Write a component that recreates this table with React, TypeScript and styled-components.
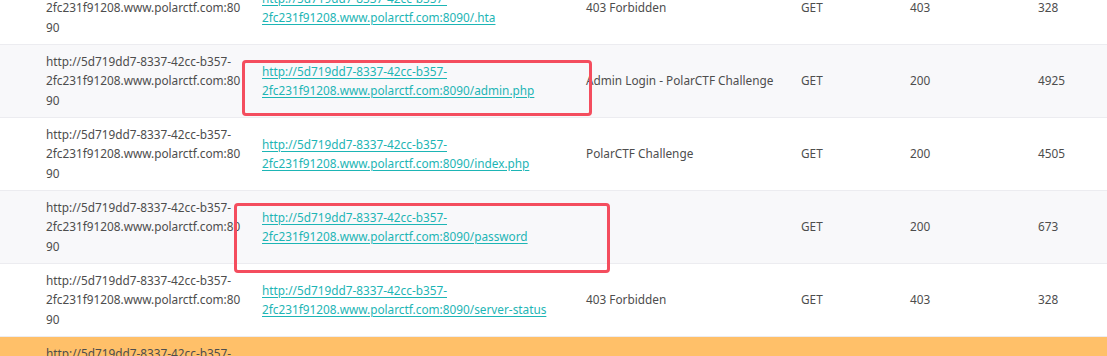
import styled, { createGlobalStyle } from 'styled-components';

const GlobalStyle = createGlobalStyle`
  html, body {
    margin: 0;
    padding: 0;
    background: #ffffff;
  }
  body {
    font-family: 'Noto Sans', 'Open Sans', sans-serif;
  }
`;

const Viewport = styled.div`
  position: relative;
  width: 1107px;
  height: 356px;
  overflow: hidden;
  background: #ffffff;
`;

// table is scrolled, first row is cut at the top
const Table = styled.div`
  margin-top: -28px;
  display: flex;
  flex-direction: column;
`;

const Row = styled.div<{ $tone: 'plain' | 'striped' | 'hit' }>`
  display: grid;
  grid-template-columns: 36px 216px 324px 215px 109px 128px 1fr;
  align-items: center;
  height: 72px;
  border-bottom: 1px solid #ececf0;
  background: ${(p) =>
    p.$tone === 'striped' ? '#f8f8fa' : p.$tone === 'hit' ? '#ffc069' : '#ffffff'};
`;

const Cell = styled.div`
  padding: 0 10px;
  font-size: 11.8px;
  line-height: 19.5px;
  color: #4d4d4d;
  overflow-wrap: anywhere;
`;

const Link = styled.a`
  color: #1db5b5;
  text-decoration: underline;
  text-underline-offset: 2px;
  cursor: pointer;
`;

const Mark = styled.div<{ $left: number; $top: number; $w: number; $h: number }>`
  position: absolute;
  left: ${(p) => p.$left}px;
  top: ${(p) => p.$top}px;
  width: ${(p) => p.$w}px;
  height: ${(p) => p.$h}px;
  box-sizing: border-box;
  border: 3px solid #f44d5e;
  border-radius: 4px;
  pointer-events: none;
`;

const HOST = 'http://5d719dd7-8337-42cc-b357-2fc231f91208.www.polarctf.com:8090';

type Hit = {
  path: string;
  title: string;
  status: string;
  size: string;
};

const hits: Hit[] = [
  { path: '/.hta', title: '403 Forbidden', status: '403', size: '328' },
  { path: '/admin.php', title: 'Admin Login - PolarCTF Challenge', status: '200', size: '4925' },
  { path: '/index.php', title: 'PolarCTF Challenge', status: '200', size: '4505' },
  { path: '/password', title: '', status: '200', size: '673' },
  { path: '/server-status', title: '403 Forbidden', status: '403', size: '328' },
  { path: '/server-info', title: '403 Forbidden', status: '403', size: '328' },
];

export default function App() {
  return (
    <Viewport>
      <GlobalStyle />
      <Table>
        {hits.map((h, i) => (
          <Row key={h.path} $tone={i === 5 ? 'hit' : i % 2 === 1 ? 'striped' : 'plain'}>
            <div />
            <Cell>{HOST}</Cell>
            <Cell>
              <Link>{HOST + h.path}</Link>
            </Cell>
            <Cell>{h.title}</Cell>
            <Cell>GET</Cell>
            <Cell>{h.status}</Cell>
            <Cell>{h.size}</Cell>
          </Row>
        ))}
      </Table>
      <Mark $left={242} $top={60} $w={350} $h={56} />
      <Mark $left={234} $top={203} $w={376} $h={70} />
    </Viewport>
  );
}
